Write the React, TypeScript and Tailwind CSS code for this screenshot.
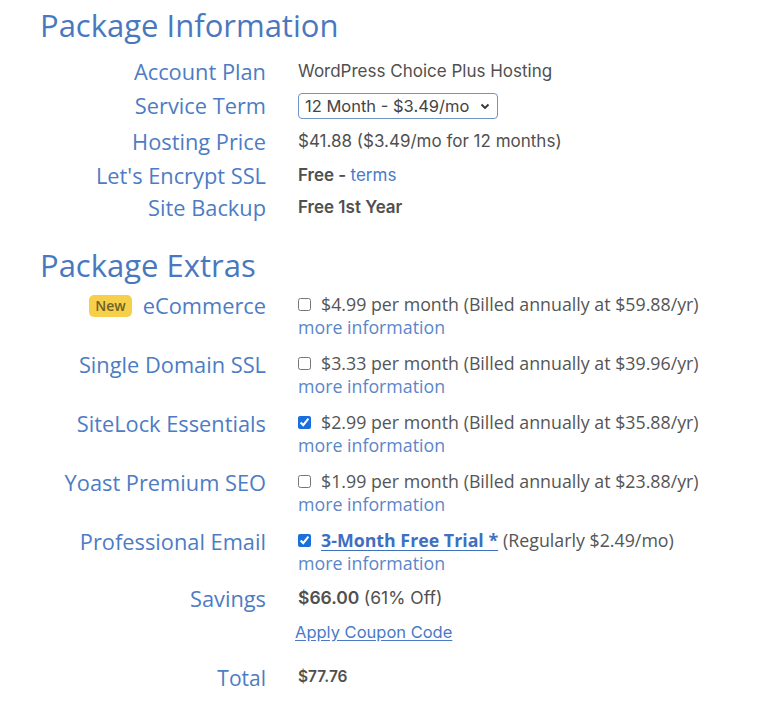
import React from "react"

const sans = "font-['Open_Sans',sans-serif]"
const prox = "font-['Inter','Liberation_Sans',sans-serif]"

const info = [
  { label: "Account Plan", value: "plan" },
  { label: "Service Term", value: "term" },
  { label: "Hosting Price", value: "price" },
  { label: "Let's Encrypt SSL", value: "ssl" },
  { label: "Site Backup", value: "backup" },
]

const extras = [
  { label: "eCommerce", badge: true, price: "$4.99", annual: "$59.88", checked: false },
  { label: "Single Domain SSL", price: "$3.33", annual: "$39.96", checked: false },
  { label: "SiteLock Essentials", price: "$2.99", annual: "$35.88", checked: true },
  { label: "Yoast Premium SEO", price: "$1.99", annual: "$23.88", checked: false },
]

function Check({ checked }: { checked: boolean }) {
  return (
    <input
      type="checkbox"
      defaultChecked={checked}
      className="m-0 mr-[10px] h-[13px] w-[13px] shrink-0 accent-[#1a6fdc]"
    />
  )
}

function InfoValue({ kind }: { kind: string }) {
  if (kind === "plan") return <span>WordPress Choice Plus Hosting</span>
  if (kind === "term")
    return (
      <div className="relative w-[200px]">
        <select
          defaultValue="12"
          className={`h-[26px] w-full appearance-none rounded-[4px] border border-[#6f93c6] bg-white pl-[6px] text-[16.5px] text-[#444] ${prox}`}
        >
          <option value="12">12 Month - $3.49/mo</option>
          <option value="24">24 Month - $2.95/mo</option>
          <option value="36">36 Month - $2.65/mo</option>
        </select>
        <svg
          className="pointer-events-none absolute right-[8px] top-[10px] h-[7px] w-[10px]"
          viewBox="0 0 10 7"
          fill="none"
          stroke="#333"
          strokeWidth="1.8"
        >
          <path d="M1.5 1.5 L5 5 L8.5 1.5" />
        </svg>
      </div>
    )
  if (kind === "price") return <span>$41.88 ($3.49/mo for 12 months)</span>
  if (kind === "ssl")
    return (
      <span className="font-semibold">
        Free - <a className="font-normal text-[#4a7ac6]">terms</a>
      </span>
    )
  return <span className="font-semibold">Free 1st Year</span>
}

export default function App() {
  return (
    <div className={`min-h-[709px] w-[768px] bg-white ${sans}`}>
      <h1 className="pl-[40px] pt-[3px] text-[31px] leading-[44px] text-[#4a78c0]">
        Package Information
      </h1>

      <div className="mt-2 grid grid-cols-[266px_1fr] gap-x-8">
        {info.map((row, i) => (
          <React.Fragment key={row.label}>
            <div
              className={`h-[34px] text-right text-[21.8px] leading-[34px] text-[#4d7cc4] ${
                i === 2 ? "mt-[2px]" : ""
              } ${i === 4 ? "-mt-[2px]" : ""}`}
            >
              {row.label}
            </div>
            <div
              className={`flex h-[34px] items-center text-[17px] text-[#505050] ${prox} ${
                i === 2 ? "mt-[2px]" : ""
              } ${i === 4 ? "-mt-[2px]" : ""}`}
            >
              <InfoValue kind={row.value} />
            </div>
          </React.Fragment>
        ))}
      </div>

      <h2 className="mt-[18px] pl-[40px] text-[31px] leading-[44px] text-[#4a78c0]">
        Package Extras
      </h2>

      <div className="mt-[5px] grid grid-cols-[266px_1fr] gap-x-8 gap-y-[12px]">
        {extras.map((row) => (
          <React.Fragment key={row.label}>
            <div className="flex items-start justify-end text-[21.8px] leading-[28px] text-[#4d7cc4]">
              {row.badge && (
                <span className="mr-[11px] mt-[3px] rounded-[5px] bg-[#f6d04a] px-[6px] text-[14px] font-semibold leading-[22px] text-[#6e6128]">
                  New
                </span>
              )}
              {row.label}
            </div>
            <div className="text-[17.8px] text-[#555]">
              <div className="flex h-[24px] items-center">
                <Check checked={row.checked} />
                <span>
                  {row.price} per month (Billed annually at {row.annual}/yr)
                </span>
              </div>
              <a className="block h-[23px] leading-[23px] text-[#5b86c8]">more information</a>
            </div>
          </React.Fragment>
        ))}

        <div className="text-right text-[21.8px] leading-[28px] text-[#4d7cc4]">Professional Email</div>
        <div className="text-[17.8px] text-[#555]">
          <div className="flex h-[24px] items-center">
            <Check checked />
            <a className="font-bold text-[#3f6fc0] underline underline-offset-[3px]">3-Month Free Trial *</a>
            <span className="ml-[5px]">(Regularly $2.49/mo)</span>
          </div>
          <a className="block h-[23px] leading-[23px] text-[#5b86c8]">more information</a>
        </div>
      </div>

      <div className="mt-[11px] grid grid-cols-[266px_1fr] gap-x-8">
        <div className="text-right text-[21.8px] leading-[26px] text-[#4d7cc4]">Savings</div>
        <div className={`h-[24px] text-[17.5px] font-semibold leading-[24px] text-[#505050] ${prox}`}>
          $66.00 <span className="font-normal">(61% Off)</span>
        </div>
        <div />
        <a
          className={`-ml-[3px] mt-[8px] block h-[24px] text-[16.5px] leading-[24px] text-[#4a7ac6] underline underline-offset-[2px] ${prox}`}
        >
          Apply Coupon Code
        </a>
        <div className="mt-[21px] text-right text-[21px] leading-[26px] text-[#4d7cc4]">Total</div>
        <div className={`mt-[21px] h-[24px] text-[15.5px] font-semibold leading-[24px] text-[#505050] ${prox}`}>
          $77.76
        </div>
      </div>
    </div>
  )
}
